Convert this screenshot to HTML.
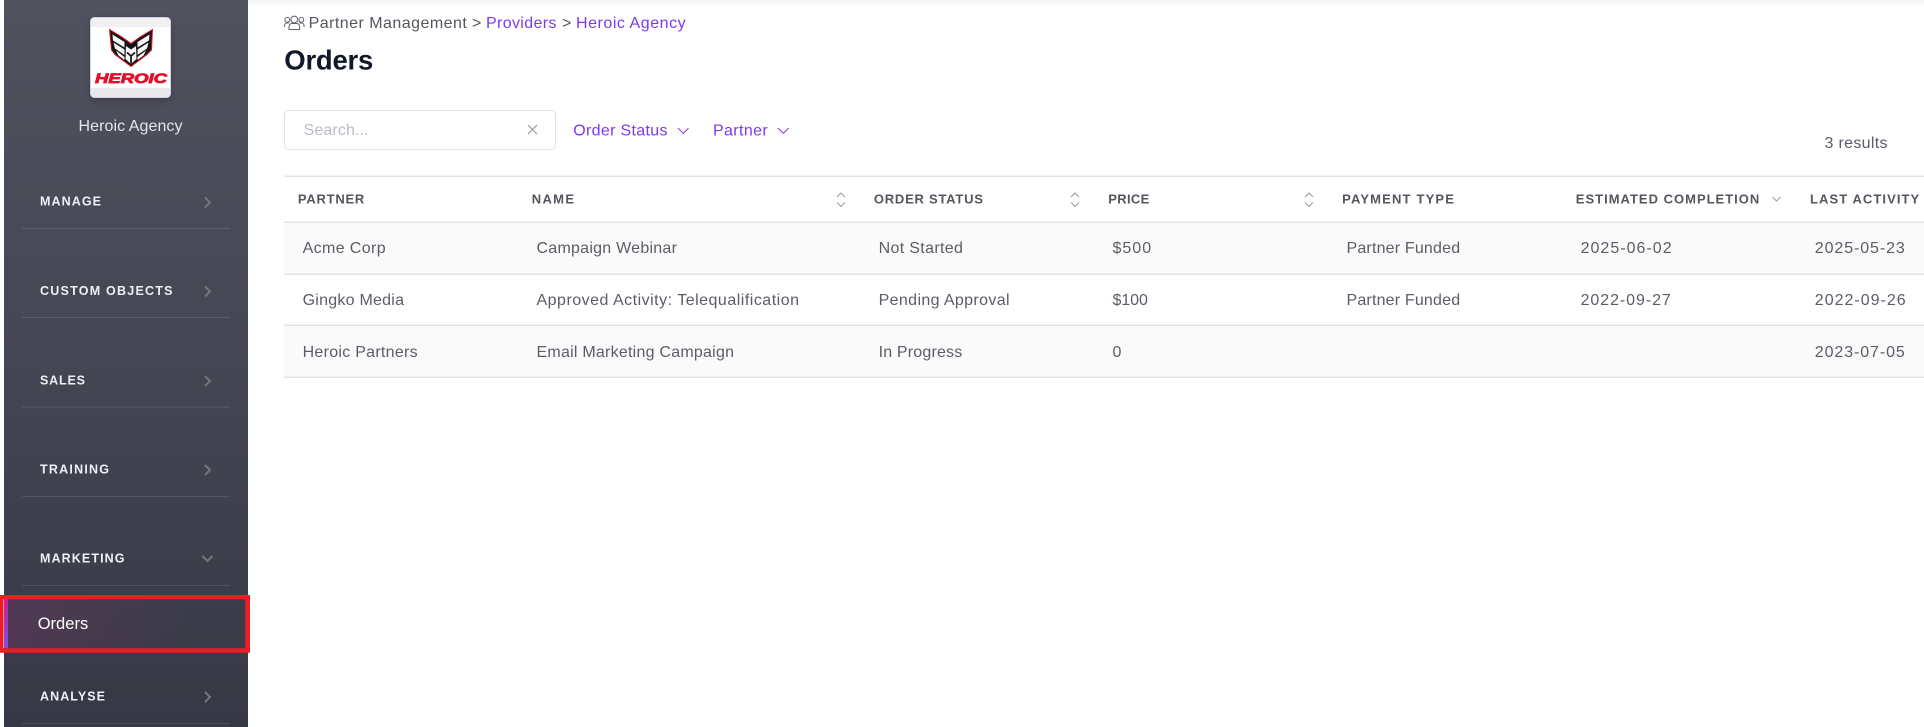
<!DOCTYPE html>
<html lang="en">
<head>
<meta charset="utf-8">
<title>Orders</title>
<style>
html,body{margin:0;padding:0;background:#fff;width:1924px;height:727px;overflow:hidden}
svg{display:block}
text{font-family:"Liberation Sans",Arial,sans-serif}
.nav{font-size:12.5px;font-weight:700;fill:#eef0f4}
.th{font-size:13px;font-weight:700;fill:#54565f}
.td{font-size:16px;fill:#5a5d67}
.pur{fill:#7c3aed}
.ch{fill:none;stroke:#74757f;stroke-width:2}
.so{fill:none;stroke:#9a9ca3;stroke-width:1}
.ln{fill:#e3e3e6}
</style>
</head>
<body>
<svg width="1924" height="727" viewBox="0 0 1924 727" xmlns="http://www.w3.org/2000/svg">
<defs>
<linearGradient id="side" x1="0" y1="0" x2="0" y2="1">
<stop offset="0" stop-color="#50525e"/><stop offset=".45" stop-color="#464755"/><stop offset="1" stop-color="#373845"/>
</linearGradient>
<linearGradient id="sel" x1="0" y1="0" x2="1" y2="0">
<stop offset="0" stop-color="#a12a78" stop-opacity=".22"/><stop offset=".75" stop-color="#a12a78" stop-opacity="0"/>
</linearGradient>
<linearGradient id="bar" x1="0" y1="0" x2="0" y2="1">
<stop offset="0" stop-color="#d0208c"/><stop offset="1" stop-color="#7c4fe0"/>
</linearGradient>
<linearGradient id="top" x1="0" y1="0" x2="0" y2="1">
<stop offset="0" stop-color="#f3f3f4"/><stop offset="1" stop-color="#fff"/>
</linearGradient>
<filter id="sh" x="-30%" y="-30%" width="160%" height="160%"><feDropShadow dx="0" dy="3" stdDeviation="4" flood-color="#000" flood-opacity=".22"/></filter>
</defs>

<rect width="1924" height="727" fill="#fff"/>
<rect x="248" width="1676" height="6" fill="url(#top)"/>

<!-- Sidebar -->
<rect x="4" width="244" height="727" fill="url(#side)"/>

<!-- Logo -->
<rect x="90.5" y="17.5" width="80" height="80" rx="4" fill="#fff" stroke="#d6cde6" filter="url(#sh)"/>
<path d="M91 27V21a3 3 0 0 1 3-3h73a3 3 0 0 1 3 3v6z" fill="#f1f1f2"/>
<path d="M91 88v6a3 3 0 0 0 3 3h73a3 3 0 0 0 3-3v-6z" fill="#e9e9ed"/>
<path d="M109.500 29.500 L122 37 L131 43.500 L140 37 L152.500 29.500 L151.500 50 L147 54.500 L131 66.500 L115 54.500 L111.500 50 Z" fill="#141414" stroke="#e0182d" stroke-width="1" stroke-linejoin="miter"/>
<path d="M112.500 34.500 L124.500 42 L124.500 47.500 L113 40.500 Z M113.500 42.500 L124.500 49.500 L124.500 55 L115 48.500 Z M116 50.500 L124.500 57 L124.500 60 L118.500 55.500 Z" fill="#f6f6f6"/>
<path d="M149.500 34.500 L137.500 42 L137.500 47.500 L149 40.500 Z M148.500 42.500 L137.500 49.500 L137.500 55 L147 48.500 Z M146 50.500 L137.500 57 L137.500 60 L143.500 55.500 Z" fill="#f6f6f6"/>
<path d="M126 46 L131 49.500 L136 46 L136.500 59 L131 64 L125.500 59 Z" fill="#f6f6f6"/>
<path d="M127 52.500 L131 56 L135 52.500 M131 56 V63.500" fill="none" stroke="#141414" stroke-width="1.700"/>
<text x="95" y="83" font-size="14" font-weight="700" font-style="italic" fill="#e2102a" stroke="#e2102a" stroke-width=".8" textLength="72" lengthAdjust="spacingAndGlyphs">HEROIC</text>

<text x="78.500" y="131" font-size="16" fill="#e4e6ec" textLength="104">Heroic Agency</text>

<!-- Nav -->
<text class="nav" x="40" y="205.500" textLength="61">MANAGE</text>
<path class="ch" d="M205 197.500l5 5-5 5"/>
<rect x="22" y="228" width="208" height="1" fill="#5d5e6b"/>

<text class="nav" x="40" y="295" textLength="132.500">CUSTOM OBJECTS</text>
<path class="ch" d="M205 286.500l5 5-5 5"/>
<rect x="22" y="317" width="208" height="1" fill="#5a5b68"/>

<text class="nav" x="40" y="384.500" textLength="45">SALES</text>
<path class="ch" d="M205 376l5 5-5 5"/>
<rect x="22" y="406.500" width="208" height="1" fill="#575865"/>

<text class="nav" x="40" y="473.500" textLength="69">TRAINING</text>
<path class="ch" d="M205 465l5 5-5 5"/>
<rect x="22" y="496" width="208" height="1" fill="#535461"/>

<text class="nav" x="40" y="562.500" textLength="84.500">MARKETING</text>
<path class="ch" d="M202.500 556l5 5 5-5"/>
<rect x="22" y="585" width="208" height="1" fill="#50515e"/>

<!-- Selected item -->
<rect x="0" y="595" width="4" height="58" fill="#fff"/>
<rect x="4" y="597" width="243" height="53" fill="url(#sel)"/>
<rect x="4" y="599" width="4" height="49" fill="url(#bar)"/>
<text x="37.700" y="629" font-size="16.500" fill="#fff" textLength="50.500">Orders</text>
<path d="M0 595H250V652.700H0Z M3.500 599.300V648.200H245.200V599.300Z" fill="#ee1c25" fill-rule="evenodd"/>

<text class="nav" x="40" y="700.500" textLength="65">ANALYSE</text>
<path class="ch" d="M205 692l5 5-5 5"/>
<rect x="22" y="723" width="208" height="1" fill="#4c4d59"/>

<!-- Breadcrumb -->
<g fill="none" stroke="#5f6069" stroke-width="1">
<circle cx="294.300" cy="19.500" r="3.400"/>
<circle cx="287.300" cy="19.800" r="2.400"/>
<circle cx="301.300" cy="19.800" r="2.400"/>
<path d="M289 29.500v-3a3 3 0 0 1 3-3h4.600a3 3 0 0 1 3 3v3z"/>
<path d="M284.500 27v-1.500a2.500 2.500 0 0 1 2.500-2.500h2M304 27v-1.500a2.500 2.500 0 0 0-2.500-2.500h-2"/>
</g>
<text x="308.600" y="28" font-size="16" fill="#55565f" textLength="158.200">Partner Management</text>
<text x="472" y="28" font-size="16" fill="#55565f">&gt;</text>
<text class="pur" x="486" y="28" font-size="16" textLength="70.400">Providers</text>
<text x="562" y="28" font-size="16" fill="#55565f">&gt;</text>
<text class="pur" x="576" y="28" font-size="16" textLength="109.600">Heroic Agency</text>

<!-- Title -->
<text x="284.300" y="69.500" font-size="27.500" font-weight="700" fill="#111827" textLength="89">Orders</text>

<!-- Filters -->
<rect x="284.500" y="110.500" width="271" height="39" rx="4" fill="#fff" stroke="#e1e4ea"/>
<text x="303.600" y="135" font-size="16" fill="#b9bcc6" textLength="65">Search...</text>
<path d="M528 125l9 9M537 125l-9 9" stroke="#a3a5ac" stroke-width="1.300" fill="none"/>
<text class="pur" x="573.200" y="135.500" font-size="16" textLength="94.300">Order Status</text>
<path d="M678 128l5.300 5.300 5.300-5.300" fill="none" stroke="#7c3aed" stroke-width="1"/>
<text class="pur" x="713" y="135.500" font-size="16" textLength="54.700">Partner</text>
<path d="M778 128l5.300 5.300 5.300-5.300" fill="none" stroke="#7c3aed" stroke-width="1"/>
<text x="1824.500" y="148" font-size="16" fill="#5a5d67" textLength="63">3 results</text>

<!-- Table -->
<rect x="284" y="223" width="1640" height="51" fill="#fafafa"/>
<rect x="284" y="326" width="1640" height="51" fill="#fafafa"/>
<rect class="ln" x="284" y="175.500" width="1640" height="1.500"/>
<rect class="ln" x="284" y="221.500" width="1640" height="1.500"/>
<rect class="ln" x="284" y="273.500" width="1640" height="1.500"/>
<rect class="ln" x="284" y="324.500" width="1640" height="1.500"/>
<rect class="ln" x="284" y="376.500" width="1640" height="1.500"/>

<text class="th" x="297.900" y="203.500" textLength="66.400">PARTNER</text>
<text class="th" x="531.800" y="203.500" textLength="42.200">NAME</text>
<text class="th" x="873.900" y="203.500" textLength="109">ORDER STATUS</text>
<text class="th" x="1108.200" y="203.500" textLength="41.100">PRICE</text>
<text class="th" x="1342.100" y="203.500" textLength="111.800">PAYMENT TYPE</text>
<text class="th" x="1575.800" y="203.500" textLength="183.500">ESTIMATED COMPLETION</text>
<text class="th" x="1810" y="203.500" textLength="109.200">LAST ACTIVITY</text>

<path class="so" d="M837 197l4-4 4 4M837 202.500l4 4 4-4"/>
<path class="so" d="M1071 197l4-4 4 4M1071 202.500l4 4 4-4"/>
<path class="so" d="M1305 197l4-4 4 4M1305 202.500l4 4 4-4"/>
<path class="so" d="M1772.500 197l4 4 4-4"/>

<text class="td" x="302.600" y="253" textLength="83">Acme Corp</text>
<text class="td" x="536.500" y="253" textLength="140.400">Campaign Webinar</text>
<text class="td" x="878.600" y="253" textLength="84.300">Not Started</text>
<text class="td" x="1112.500" y="253" textLength="38.600">$500</text>
<text class="td" x="1346.500" y="253" textLength="113.600">Partner Funded</text>
<text class="td" x="1580.600" y="253" textLength="91">2025-06-02</text>
<text class="td" x="1814.800" y="253" textLength="90">2025-05-23</text>

<text class="td" x="302.600" y="305" textLength="101.400">Gingko Media</text>
<text class="td" x="536.500" y="305" textLength="262.500">Approved Activity: Telequalification</text>
<text class="td" x="878.600" y="305" textLength="131">Pending Approval</text>
<text class="td" x="1112.500" y="305" textLength="35.400">$100</text>
<text class="td" x="1346.500" y="305" textLength="113.600">Partner Funded</text>
<text class="td" x="1580.600" y="305" textLength="90.200">2022-09-27</text>
<text class="td" x="1814.800" y="305" textLength="90.900">2022-09-26</text>

<text class="td" x="302.600" y="357" textLength="115">Heroic Partners</text>
<text class="td" x="536.500" y="357" textLength="197.500">Email Marketing Campaign</text>
<text class="td" x="878.600" y="357" textLength="83.600">In Progress</text>
<text class="td" x="1112.500" y="357" textLength="9.300">0</text>
<text class="td" x="1814.800" y="357" textLength="90">2023-07-05</text>
</svg>
</body>
</html>
